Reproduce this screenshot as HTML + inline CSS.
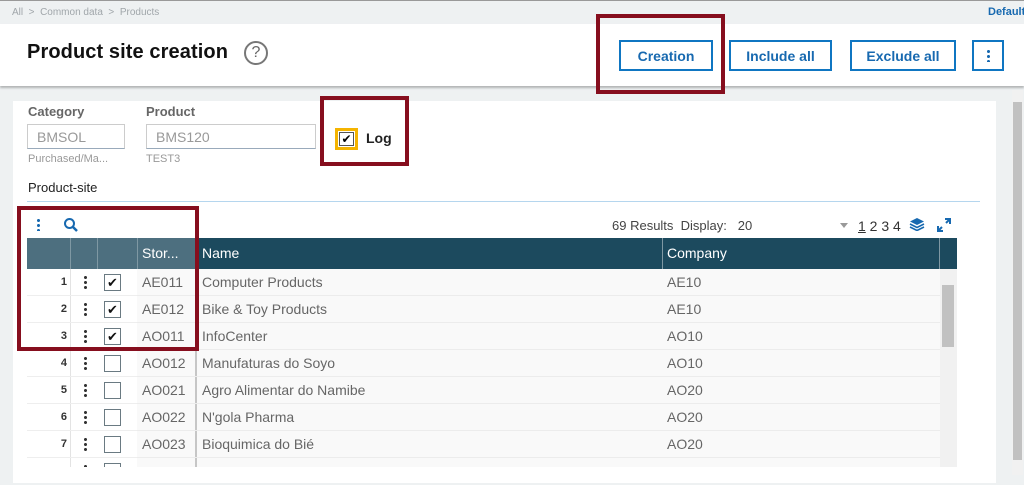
<!DOCTYPE html>
<html><head><meta charset="utf-8"><style>
*{box-sizing:border-box;margin:0;padding:0}
body{width:1024px;height:485px;overflow:hidden;background:#eef1f2;font-family:"Liberation Sans",sans-serif;position:relative}
.a{position:absolute}
.btn{position:absolute;top:40px;height:31px;border:2px solid #0f76c2;background:#fff;color:#1769b0;font-weight:bold;font-size:14px;display:flex;align-items:center;justify-content:center}
.red{position:absolute;border:4px solid #860e1e}
.row{position:absolute;left:27px;width:913px;height:27px;border-bottom:1px solid #eee}
.cell{position:absolute;top:0;height:27px;line-height:27px;font-size:14px;color:#666}
.dots{background-image:radial-gradient(#e8e8e8 0.6px,transparent 0.7px);background-size:2px 2px}
.num{position:absolute;left:0;width:40px;text-align:right;font-size:11px;font-weight:bold;color:#333;line-height:27px}
.vd{position:absolute;left:57px;top:6px;width:3px;height:15px;background:radial-gradient(circle,#333 1.4px,transparent 1.6px) 0 0/3px 5px repeat-y}
.cb{position:absolute;left:77px;top:5px;width:17px;height:17px;border:1px solid #6a7a82;background:#fff;font-size:13px;line-height:15px;text-align:center;color:#111}
</style></head><body>
<div class="a" style="left:0;top:0;width:1024px;height:1px;background:#999"></div>
<div class="a" style="left:12px;top:7px;font-size:10px;color:#a0a6aa">All &nbsp;&gt;&nbsp; Common data &nbsp;&gt;&nbsp; Products</div>
<div class="a" style="left:988px;top:6px;font-size:11px;font-weight:bold;color:#1769b0">Default</div>
<div class="a" style="left:0;top:24px;width:1024px;height:62px;background:#fff;box-shadow:0 2px 2px rgba(0,0,0,.25)"></div>
<div class="a" style="left:27px;top:41px;font-size:20px;font-weight:bold;color:#111;letter-spacing:0.1px">Product site creation</div>
<div class="a" style="left:244px;top:41px;width:24px;height:24px;border:2px solid #777;border-radius:50%;font-size:16px;color:#666;text-align:center;line-height:20px">?</div>
<div class="btn" style="left:619px;width:94px">Creation</div>
<div class="btn" style="left:729px;width:103px">Include all</div>
<div class="btn" style="left:850px;width:106px">Exclude all</div>
<div class="btn" style="left:972px;width:32px;font-size:18px"><span style="display:block;width:3px;height:13px;background:radial-gradient(circle,#1769b0 1.4px,transparent 1.6px) 0 0/3px 5px repeat-y"></span></div>
<div class="red" style="left:596px;top:14px;width:129px;height:80px"></div>

<div class="a" style="left:13px;top:101px;width:983px;height:382px;background:#fff"></div>
<div class="a" style="left:1012px;top:90px;width:11px;height:385px;background:#f1f1f1"></div>
<div class="a" style="left:1013px;top:102px;width:9px;height:358px;background:#c1c1c1"></div>

<div class="a" style="left:28px;top:104px;font-size:13px;font-weight:bold;color:#666">Category</div>
<div class="a" style="left:27px;top:124px;width:98px;height:25px;border:1px solid #ccc;border-bottom-color:#9ab;font-size:14px;color:#999;padding:4px 9px">BMSOL</div>
<div class="a" style="left:28px;top:153px;font-size:11px;color:#999">Purchased/Ma...</div>
<div class="a" style="left:146px;top:104px;font-size:13px;font-weight:bold;color:#666">Product</div>
<div class="a" style="left:146px;top:124px;width:170px;height:25px;border:1px solid #ccc;border-bottom-color:#9ab;font-size:14px;color:#999;padding:4px 9px">BMS120</div>
<div class="a" style="left:146px;top:153px;font-size:11px;color:#999">TEST3</div>
<div class="a" style="left:335px;top:128px;width:23px;height:22px;border:3px solid #f5b400;background:#fff"><div style="margin:1px;width:15px;height:14px;border:1px solid #555;font-size:12px;line-height:12px;text-align:center">✔</div></div>
<div class="a" style="left:366px;top:130px;font-size:14px;font-weight:bold;color:#222">Log</div>
<div class="red" style="left:320px;top:96px;width:89px;height:70px"></div>

<div class="a" style="left:28px;top:180px;font-size:13px;color:#222">Product-site</div>
<div class="a" style="left:27px;top:201px;width:953px;height:1px;background:#b5d6ee"></div>

<div class="a" style="left:37px;top:218px;width:3px;height:13px;background:radial-gradient(circle,#1769b0 1.4px,transparent 1.6px) 0 0/3px 5px repeat-y"></div>
<svg class="a" style="left:63px;top:217px" width="16" height="16"><circle cx="6.5" cy="6.5" r="4.5" stroke="#1769b0" stroke-width="2" fill="none"/><path d="M10 10l4 4" stroke="#1769b0" stroke-width="2.5"/></svg>
<div class="a" style="left:612px;top:218px;font-size:13px;color:#444">69 Results &nbsp;Display: &nbsp;&nbsp;20</div>
<div class="a" style="left:840px;top:223px;border:4px solid transparent;border-top:5px solid #999"></div>
<div class="a" style="left:858px;top:218px;font-size:14px;color:#333"><u>1</u> 2 3 4</div>
<svg class="a" style="left:909px;top:217px" width="16" height="14"><path d="M8 1l7 3.5-7 3.5-7-3.5z" fill="#1769b0"/><path d="M1 7l7 3.5 7-3.5M1 10l7 3.5 7-3.5" stroke="#1769b0" stroke-width="1.6" fill="none"/></svg>
<svg class="a" style="left:936px;top:217px" width="16" height="16"><path d="M9 2h5v5M14 2l-4 4M7 14H2V9M2 14l4-4" stroke="#1769b0" stroke-width="2" fill="none"/></svg>

<div class="a" style="left:27px;top:238px;width:930px;height:31px;background:#1c4a5e"></div>
<div class="a" style="left:27px;top:238px;width:170px;height:31px;background:#4d6f7f"></div>
<div class="a" style="left:70px;top:238px;width:1px;height:31px;background:#7f98a3"></div>
<div class="a" style="left:97px;top:238px;width:1px;height:31px;background:#7f98a3"></div>
<div class="a" style="left:137px;top:238px;width:1px;height:31px;background:#7f98a3"></div>
<div class="a" style="left:662px;top:238px;width:1px;height:31px;background:#7f98a3"></div>
<div class="a" style="left:939px;top:238px;width:1px;height:31px;background:#7f98a3"></div>
<div class="a" style="left:142px;top:245px;font-size:14px;color:#fff">Stor...</div>
<div class="a" style="left:202px;top:245px;font-size:14px;color:#fff">Name</div>
<div class="a" style="left:667px;top:245px;font-size:14px;color:#fff">Company</div>

<div class="a" style="left:940px;top:269px;width:17px;height:198px;background:#f1f1f1"></div>
<div class="a" style="left:942px;top:285px;width:12px;height:62px;background:#c1c1c1"></div>
<div class="a" style="left:70px;top:269px;width:1px;height:198px;background:#e3e3e3"></div>
<div class="a" style="left:195px;top:350px;width:2px;height:117px;background:#bbb"></div>

<div class="row" style="top:269px"><div class="num">1</div><div class="vd"></div><div class="cb">✔</div><div class="cell dots" style="left:110px;width:60px;padding-left:5px">AE011</div><div class="cell dots" style="left:170px;width:465px;padding-left:5px">Computer Products</div><div class="cell dots" style="left:635px;width:278px;padding-left:5px">AE10</div></div>
<div class="row" style="top:296px"><div class="num">2</div><div class="vd"></div><div class="cb">✔</div><div class="cell dots" style="left:110px;width:60px;padding-left:5px">AE012</div><div class="cell dots" style="left:170px;width:465px;padding-left:5px">Bike &amp; Toy Products</div><div class="cell dots" style="left:635px;width:278px;padding-left:5px">AE10</div></div>
<div class="row" style="top:323px"><div class="num">3</div><div class="vd"></div><div class="cb">✔</div><div class="cell dots" style="left:110px;width:60px;padding-left:5px">AO011</div><div class="cell dots" style="left:170px;width:465px;padding-left:5px">InfoCenter</div><div class="cell dots" style="left:635px;width:278px;padding-left:5px">AO10</div></div>
<div class="row" style="top:350px"><div class="num">4</div><div class="vd"></div><div class="cb"></div><div class="cell dots" style="left:110px;width:60px;padding-left:5px">AO012</div><div class="cell dots" style="left:170px;width:465px;padding-left:5px">Manufaturas do Soyo</div><div class="cell dots" style="left:635px;width:278px;padding-left:5px">AO10</div></div>
<div class="row" style="top:377px"><div class="num">5</div><div class="vd"></div><div class="cb"></div><div class="cell dots" style="left:110px;width:60px;padding-left:5px">AO021</div><div class="cell dots" style="left:170px;width:465px;padding-left:5px">Agro Alimentar do Namibe</div><div class="cell dots" style="left:635px;width:278px;padding-left:5px">AO20</div></div>
<div class="row" style="top:404px"><div class="num">6</div><div class="vd"></div><div class="cb"></div><div class="cell dots" style="left:110px;width:60px;padding-left:5px">AO022</div><div class="cell dots" style="left:170px;width:465px;padding-left:5px">N'gola Pharma</div><div class="cell dots" style="left:635px;width:278px;padding-left:5px">AO20</div></div>
<div class="row" style="top:431px"><div class="num">7</div><div class="vd"></div><div class="cb"></div><div class="cell dots" style="left:110px;width:60px;padding-left:5px">AO023</div><div class="cell dots" style="left:170px;width:465px;padding-left:5px">Bioquimica do Bié</div><div class="cell dots" style="left:635px;width:278px;padding-left:5px">AO20</div></div>
<div class="row" style="top:458px;height:9px;overflow:hidden;border:none"><div class="vd"></div><div class="cb"></div><div class="cell dots" style="left:110px;width:803px;height:9px"></div></div>

<div class="red" style="left:17px;top:206px;width:182px;height:145px"></div>
</body></html>
